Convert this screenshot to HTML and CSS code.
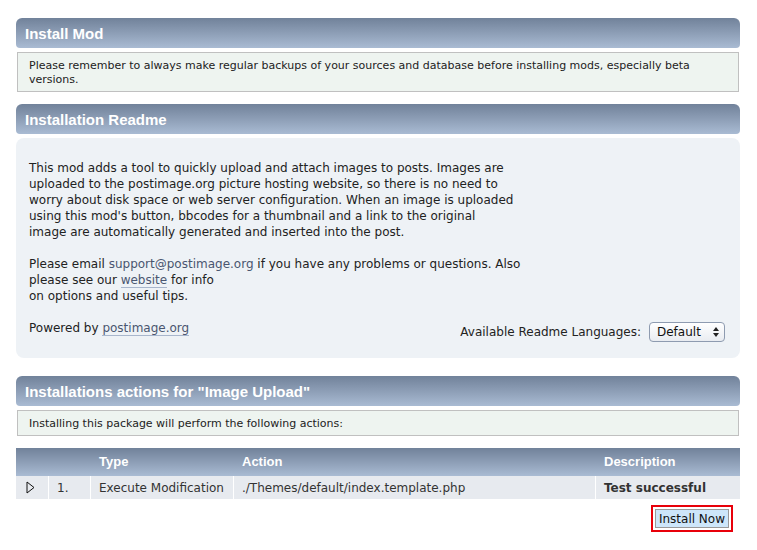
FILE: index.html
```html
<!DOCTYPE html>
<html>
<head>
<meta charset="utf-8">
<link rel="stylesheet" href="styles.css">
</head>
<body>
<div class="page">
  <div class="cat-bar"><h3>Install Mod</h3></div>
  <div class="info-box">Please remember to always make regular backups of your sources and database before installing mods, especially beta<br>versions.</div>

  <div class="cat-bar"><h3>Installation Readme</h3></div>
  <div class="readme">
    <p>This mod adds a tool to quickly upload and attach images to posts. Images are<br>uploaded to the postimage.org picture hosting website, so there is no need to<br>worry about disk space or web server configuration. When an image is uploaded<br>using this mod's button, bbcodes for a thumbnail and a link to the original<br>image are automatically generated and inserted into the post.</p>
    <p>Please email <a href="#">support@postimage.org</a> if you have any problems or questions. Also<br>please see our <a class="ul" href="#">website</a> for info<br>on options and useful tips.</p>
    <div class="readme-foot">
      <span class="powered">Powered by <a class="ul" href="#">postimage.org</a></span>
      <label class="lang">Available Readme Languages:
        <span class="select">Default <svg class="arrows" width="6" height="10" viewBox="0 0 6 10"><path d="M3 0 L6 4 L0 4 Z M0 6 L6 6 L3 10 Z" fill="#222"/></svg></span>
      </label>
    </div>
  </div>

  <div class="cat-bar"><h3>Installations actions for "Image Upload"</h3></div>
  <div class="info-box small">Installing this package will perform the following actions:</div>

  <table class="actions">
    <thead>
      <tr>
        <th class="c-arrow"></th>
        <th class="c-num"></th>
        <th class="c-type">Type</th>
        <th class="c-action">Action</th>
        <th class="c-desc">Description</th>
      </tr>
    </thead>
    <tbody>
      <tr>
        <td class="c-arrow"><svg width="9" height="13" viewBox="0 0 9 13"><path d="M1 1 L8 6.5 L1 12 Z" fill="none" stroke="#111" stroke-width="1"/></svg></td>
        <td class="c-num">1.</td>
        <td class="c-type">Execute Modification</td>
        <td class="c-action">./Themes/default/index.template.php</td>
        <td class="c-desc"><strong>Test successful</strong></td>
      </tr>
    </tbody>
  </table>

  <div class="submit-row">
    <span class="highlight"><button class="btn">Install Now</button></span>
  </div>
</div>
</body>
</html>
```

FILE: styles.css
```css
html, body {
  margin: 0;
  padding: 0;
  background: #fff;
}
body {
  font-family: "DejaVu Sans", Verdana, sans-serif;
  color: #222;
}
.page {
  width: 724px;
  padding: 18px 0 0 16px;
}
.cat-bar {
  height: 30px;
  border-radius: 6px 6px 4px 4px;
  background: linear-gradient(to bottom, #71829a 0%, #8d9eb6 50%, #a9bbd3 100%);
  display: flex;
  align-items: center;
  padding: 0 9px;
}
.cat-bar h3 {
  margin: 0;
  font-family: "Liberation Sans", Arial, sans-serif;
  font-weight: bold;
  font-size: 15px;
  color: #fff;
}
.info-box {
  margin: 4px 1px 12px;
  border: 1px solid #c0c0c0;
  background: #eef4f0;
  font-size: 11px;
  line-height: 14px;
  padding: 6px 11px 4px;
  height: 28px;
}
.info-box.small {
  height: 14px;
  padding: 6px 11px 4px;
}
.readme {
  margin: 4px 0 18px;
  background: #eef2f6;
  border-radius: 8px;
  padding: 22px 13px 17px;
  font-size: 12px;
  line-height: 16px;
  height: 181px;
}
.readme p {
  margin: 0 0 16px;
  white-space: nowrap;
}
.readme a {
  color: #4a5670;
  text-decoration: none;
}
.readme a.ul {
  border-bottom: 1px solid #a8b6cc;
}
.readme-foot {
  display: flex;
  justify-content: space-between;
  align-items: flex-start;
}
.lang {
  display: flex;
  align-items: center;
  gap: 8px;
  margin-top: 2px;
  padding-right: 2px;
}
.select {
  display: inline-flex;
  align-items: center;
  justify-content: space-between;
  width: 62px;
  height: 18px;
  padding: 0 5px 0 7px;
  border: 1px solid #8e9bb0;
  border-radius: 4px;
  background: linear-gradient(to bottom, #ffffff, #e9ecf1);
  color: #111;
  font-size: 12px;
}
.arrows {
  display: block;
}
.actions {
  width: 724px;
  border-collapse: collapse;
  font-size: 12px;
}
.actions thead tr {
  background: linear-gradient(to bottom, #71829a 0%, #8d9eb6 50%, #a9bbd3 100%);
  height: 28px;
}
.actions th {
  text-align: left;
  font-family: "Liberation Sans", Arial, sans-serif;
  font-size: 13px;
  font-weight: bold;
  color: #fff;
  padding: 0 8px 2px;
  border-left: 1px solid transparent;
}
.actions th:first-child {
  border-left: none;
}
.actions tbody tr {
  height: 23px;
  background: #e7eaef;
}
.actions td {
  padding: 0 8px;
  border-left: 1px solid #fff;
  color: #333;
  white-space: nowrap;
}
.actions td:first-child {
  border-left: none;
}
.c-arrow { width: 16px; }
.actions td.c-arrow { padding: 0 0 0 10px; }
.actions td.c-arrow svg { display: block; }
.c-num { width: 25px; }
.c-type { width: 126px; }
.c-action { width: 345px; }
.c-desc strong { color: #333; }
.submit-row {
  display: flex;
  justify-content: flex-end;
  padding: 6px 7px 0 0;
}
.highlight {
  display: inline-block;
  border: 2px solid #e8000a;
  padding: 2px;
}
.btn {
  display: block;
  margin: 0;
  height: 19px;
  padding: 0 3px;
  border: 1px solid #999;
  background: #cde6fa;
  font-family: "DejaVu Sans", Verdana, sans-serif;
  font-size: 12px;
  color: #111;
}
```
